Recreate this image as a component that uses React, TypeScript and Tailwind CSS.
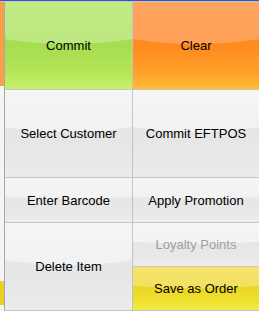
import React from "react";

type Tone = "green" | "orange" | "gray" | "yellow";

const base: Record<Tone, string> = {
  green: "bg-[linear-gradient(to_bottom,#b9e67a_0%,#a6dd50_50%,#b4e458_80%,#c9f26a_100%)]",
  orange: "bg-[linear-gradient(to_bottom,#ff9a48_0%,#ff8a1e_50%,#ffa02a_80%,#ffbc34_100%)]",
  gray: "bg-[linear-gradient(to_bottom,#ececec_0%,#e6e6e6_50%,#e8e8e8_80%,#ececec_100%)]",
  yellow: "bg-[linear-gradient(to_bottom,#f2dc3a_0%,#ecd626_50%,#efe030_80%,#f4ec46_100%)]",
};

const gloss: Record<Tone, string> = {
  green: "bg-[linear-gradient(to_bottom,#c6ee8e,#bde880)]",
  orange: "bg-[linear-gradient(to_bottom,#ffac68,#ffa058)]",
  gray: "bg-[linear-gradient(to_bottom,#fafafa,#f2f2f2)]",
  yellow: "bg-[linear-gradient(to_bottom,#f8ea84,#f4e060)]",
};

function Btn({
  label,
  tone,
  disabled,
  className,
}: {
  label: string;
  tone: Tone;
  disabled?: boolean;
  className?: string;
}) {
  return (
    <div
      className={`relative overflow-hidden flex items-center justify-center ${base[tone]} ${className ?? ""}`}
    >
      <div
        className={`absolute left-[-70%] right-[-70%] top-[-80%] h-[128%] rounded-[50%] ${gloss[tone]}`}
      />
      <span
        className={`relative text-[13px] leading-none ${disabled ? "text-[#a0a0a0]" : "text-black"}`}
        style={{ fontFamily: '"Liberation Sans", Arial, sans-serif' }}
      >
        {label}
      </span>
    </div>
  );
}

export default function App() {
  return (
    <div className="w-[259px] h-[311px] overflow-hidden bg-white flex flex-col">
      <div className="h-px bg-[#3d5a99] shrink-0" />
      <div className="h-px bg-[#b8c4dc] shrink-0" />
      <div className="flex flex-1 min-h-0">
        <div className="w-[4px] flex flex-col shrink-0">
          <div className="h-[84px] bg-[#f7a04a]" />
          <div className="flex-1 bg-[#f4f4f4]" />
          <div className="h-[24px] bg-[#e8d020]" />
          <div className="h-[6px] bg-[#f4f4f4]" />
        </div>
        <div className="w-px bg-[#a8a8a8] shrink-0" />
        <div className="flex-1 grid grid-cols-[127px_126px] grid-rows-[87px_87px_44px_43px_43px] gap-px bg-[#c4c4c4] content-start">
          <Btn label="Commit" tone="green" />
          <Btn label="Clear" tone="orange" />
          <Btn label="Select Customer" tone="gray" />
          <Btn label="Commit EFTPOS" tone="gray" />
          <Btn label="Enter Barcode" tone="gray" />
          <Btn label="Apply Promotion" tone="gray" />
          <Btn label="Delete Item" tone="gray" className="row-span-2" />
          <Btn label="Loyalty Points" tone="gray" disabled />
          <Btn label="Save as Order" tone="yellow" />
          <div className="bg-[#b4e458]" />
          <div className="bg-[#ff9a40]" />
        </div>
      </div>
    </div>
  );
}
